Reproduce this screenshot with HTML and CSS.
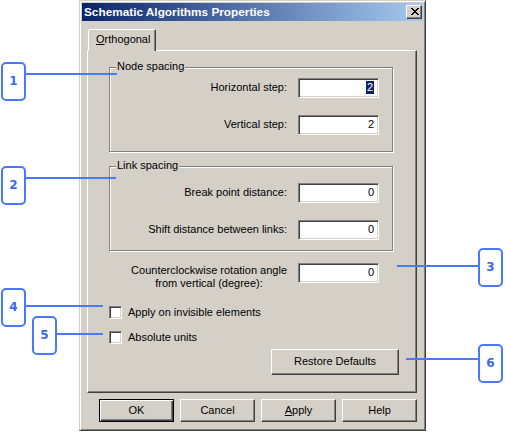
FILE: index.html
```html
<!DOCTYPE html>
<html>
<head>
<meta charset="utf-8">
<link rel="stylesheet" href="styles.css">
</head>
<body>
<div class="stage">
  <div class="dialog">
    <div class="titlebar">
      <span class="title">Schematic Algorithms Properties</span>
      <span class="close"><svg width="8" height="7" viewBox="0 0 8 7" shape-rendering="crispEdges"><path d="M0 0h2v1H0zM6 0h2v1H6zM1 1h2v1H1zM5 1h2v1H5zM2 2h4v1H2zM3 3h2v1H3zM2 4h4v1H2zM1 5h2v1H1zM5 5h2v1H5zM0 6h2v1H0zM6 6h2v1H6z" fill="#000"/></svg></span>
    </div>
    <div class="tabs">
      <div class="tab"><u>O</u>rthogonal</div>
    </div>
    <div class="panel">
      <div class="group node">
        <span class="group-title">Node spacing</span>
        <div class="field"><span class="label">Horizontal step:</span><span class="input"><span class="sel">2</span></span></div>
        <div class="field"><span class="label">Vertical step:</span><span class="input">2</span></div>
      </div>
      <div class="group link">
        <span class="group-title">Link spacing</span>
        <div class="field"><span class="label">Break point distance:</span><span class="input">0</span></div>
        <div class="field"><span class="label">Shift distance between links:</span><span class="input">0</span></div>
      </div>
      <div class="field angle"><span class="label">Counterclockwise rotation angle<br>from vertical (degree):</span><span class="input">0</span></div>
      <div class="check first"><span class="box"></span><span>Apply on invisible elements</span></div>
      <div class="check second"><span class="box"></span><span>Absolute units</span></div>
      <div class="restore-row"><span class="btn restore">Restore Defaults</span></div>
    </div>
    <div class="buttons">
      <span class="btn default">OK</span>
      <span class="btn">Cancel</span>
      <span class="btn"><u>A</u>pply</span>
      <span class="btn">Help</span>
    </div>
  </div>

  <div class="leader" style="left:26px;top:73px;width:91px"></div>
  <div class="leader" style="left:26px;top:177px;width:90px"></div>
  <div class="leader" style="left:26px;top:305px;width:77px"></div>
  <div class="leader" style="left:56px;top:333px;width:47px"></div>
  <div class="leader" style="left:397px;top:265px;width:82px"></div>
  <div class="leader" style="left:406px;top:358px;width:73px"></div>

  <div class="callout" style="left:1px;top:62px">1</div>
  <div class="callout" style="left:1px;top:166px">2</div>
  <div class="callout" style="left:478px;top:248px">3</div>
  <div class="callout" style="left:1px;top:288px">4</div>
  <div class="callout" style="left:32px;top:316px">5</div>
  <div class="callout" style="left:478px;top:344px">6</div>
</div>
</body>
</html>
```

FILE: styles.css
```css
html, body {
  margin: 0;
  padding: 0;
  background: #fff;
}
body {
  font-family: "Liberation Sans", Arial, sans-serif;
  font-size: 11px;
  color: #000;
}
.stage {
  position: relative;
  width: 505px;
  height: 432px;
  overflow: hidden;
}
.dialog {
  margin-left: 79px;
  width: 347px;
  height: 431px;
  box-sizing: border-box;
  background: #d4d0c8;
  border: 1px solid;
  border-color: #d4d0c8 #404040 #404040 #d4d0c8;
  box-shadow: inset 1px 1px 0 #fff, inset -1px -1px 0 #808080;
  padding: 2px;
  display: flex;
  flex-direction: column;
}
.titlebar {
  height: 18px;
  flex: none;
  display: flex;
  align-items: center;
  justify-content: space-between;
  padding: 0 1px 0 2px;
  background: linear-gradient(to right, #0a246a, #a6caf0);
}
.title {
  color: #fff;
  font-weight: bold;
  font-size: 11.8px;
  line-height: 14px;
  white-space: nowrap;
}
.close {
  width: 16px;
  height: 14px;
  box-sizing: border-box;
  background: #d4d0c8;
  border: 1px solid;
  border-color: #fff #404040 #404040 #fff;
  box-shadow: inset -1px -1px 0 #808080;
  display: flex;
  align-items: center;
  justify-content: center;
  padding: 0 0 1px 1px;
}
.close svg { display: block; }

.tabs {
  margin-top: 8px;
  height: 21px;
  flex: none;
  padding-left: 6px;
  display: flex;
  position: relative;
  z-index: 1;
}
.tab {
  width: 68px;
  height: 22px;
  box-sizing: border-box;
  background: #d4d0c8;
  border: 1px solid;
  border-bottom: 0;
  border-color: #fff #404040 transparent #fff;
  border-radius: 2px 2px 0 0;
  box-shadow: inset -1px 0 0 #808080;
  padding: 3px 0 0 7px;
  line-height: 13px;
}

.panel {
  margin-left: 5px;
  width: 330px;
  height: 343px;
  flex: none;
  box-sizing: border-box;
  border: 1px solid;
  border-color: #fff #404040 #404040 #fff;
  box-shadow: inset -1px -1px 0 #808080;
  padding: 0 17px 0 21px;
  display: flex;
  flex-direction: column;
}
.group {
  position: relative;
  margin-right: 6px;
  border: 1px solid #808080;
  box-shadow: inset 1px 1px 0 #fff, 1px 1px 0 #fff;
  display: flex;
  flex-direction: column;
  gap: 17px;
}
.group.node {
  margin-top: 16px;
  padding: 10px 0 16px;
}
.group.link {
  margin-top: 14px;
  padding: 16px 0 10px;
}
.group-title {
  position: absolute;
  top: -8px;
  left: 6px;
  padding: 0 1px;
  background: #d4d0c8;
  line-height: 13px;
  white-space: nowrap;
}
.field {
  display: flex;
  justify-content: flex-end;
  align-items: center;
  gap: 11px;
  padding-right: 13px;
  height: 20px;
}
.label {
  line-height: 13px;
  text-align: right;
  white-space: nowrap;
  padding-bottom: 2px;
}
.input {
  width: 81px;
  height: 20px;
  box-sizing: border-box;
  background: #fff;
  border: 1px solid;
  border-color: #808080 #fff #fff #808080;
  box-shadow: inset 1px 1px 0 #404040, inset -1px -1px 0 #d4d0c8;
  display: flex;
  align-items: center;
  justify-content: flex-end;
  padding: 0 4px 1px 0;
  line-height: 13px;
}
.sel {
  background: #0a246a;
  color: #fff;
  padding: 0 1px;
}
.field.angle {
  margin-top: 12px;
  margin-right: 6px;
  height: 26px;
  align-items: flex-start;
  padding-right: 14px;
}
.field.angle .label {
  text-align: center;
  padding: 1px 0 0;
}
.check {
  display: flex;
  align-items: center;
  gap: 6px;
  height: 13px;
  line-height: 13px;
}
.check.first { margin-top: 17px; }
.check.second { margin-top: 12px; }
.box {
  width: 13px;
  height: 13px;
  box-sizing: border-box;
  flex: none;
  background: #fff;
  border: 1px solid;
  border-color: #808080 #fff #fff #808080;
  box-shadow: inset 1px 1px 0 #404040, inset -1px -1px 0 #d4d0c8;
}
.restore-row {
  margin-top: 5px;
  display: flex;
  justify-content: flex-end;
}
.btn {
  width: 75px;
  height: 23px;
  box-sizing: border-box;
  background: #d4d0c8;
  border: 1px solid;
  border-color: #fff #404040 #404040 #fff;
  box-shadow: inset -1px -1px 0 #808080;
  display: flex;
  align-items: center;
  justify-content: center;
  line-height: 13px;
  padding-bottom: 1px;
}
.btn.restore {
  width: 128px;
  height: 26px;
}
.btn.default {
  border-color: #000;
  box-shadow: inset 1px 1px 0 #fff, inset -1px -1px 0 #404040, inset -2px -2px 0 #808080;
}
.buttons {
  margin-top: 6px;
  margin-left: 5px;
  width: 330px;
  display: flex;
  justify-content: flex-end;
  gap: 6px;
}

.leader {
  position: absolute;
  height: 2px;
  background: #4a78ff;
}
.callout {
  position: absolute;
  width: 25px;
  height: 39px;
  box-sizing: border-box;
  border: 2px solid #4a78ff;
  border-radius: 5px;
  background: #fff;
  color: #3a68f2;
  font-family: "DejaVu Sans", Verdana, sans-serif;
  font-weight: bold;
  font-size: 12px;
  display: flex;
  align-items: center;
  justify-content: center;
  padding-bottom: 1px;
}
```
